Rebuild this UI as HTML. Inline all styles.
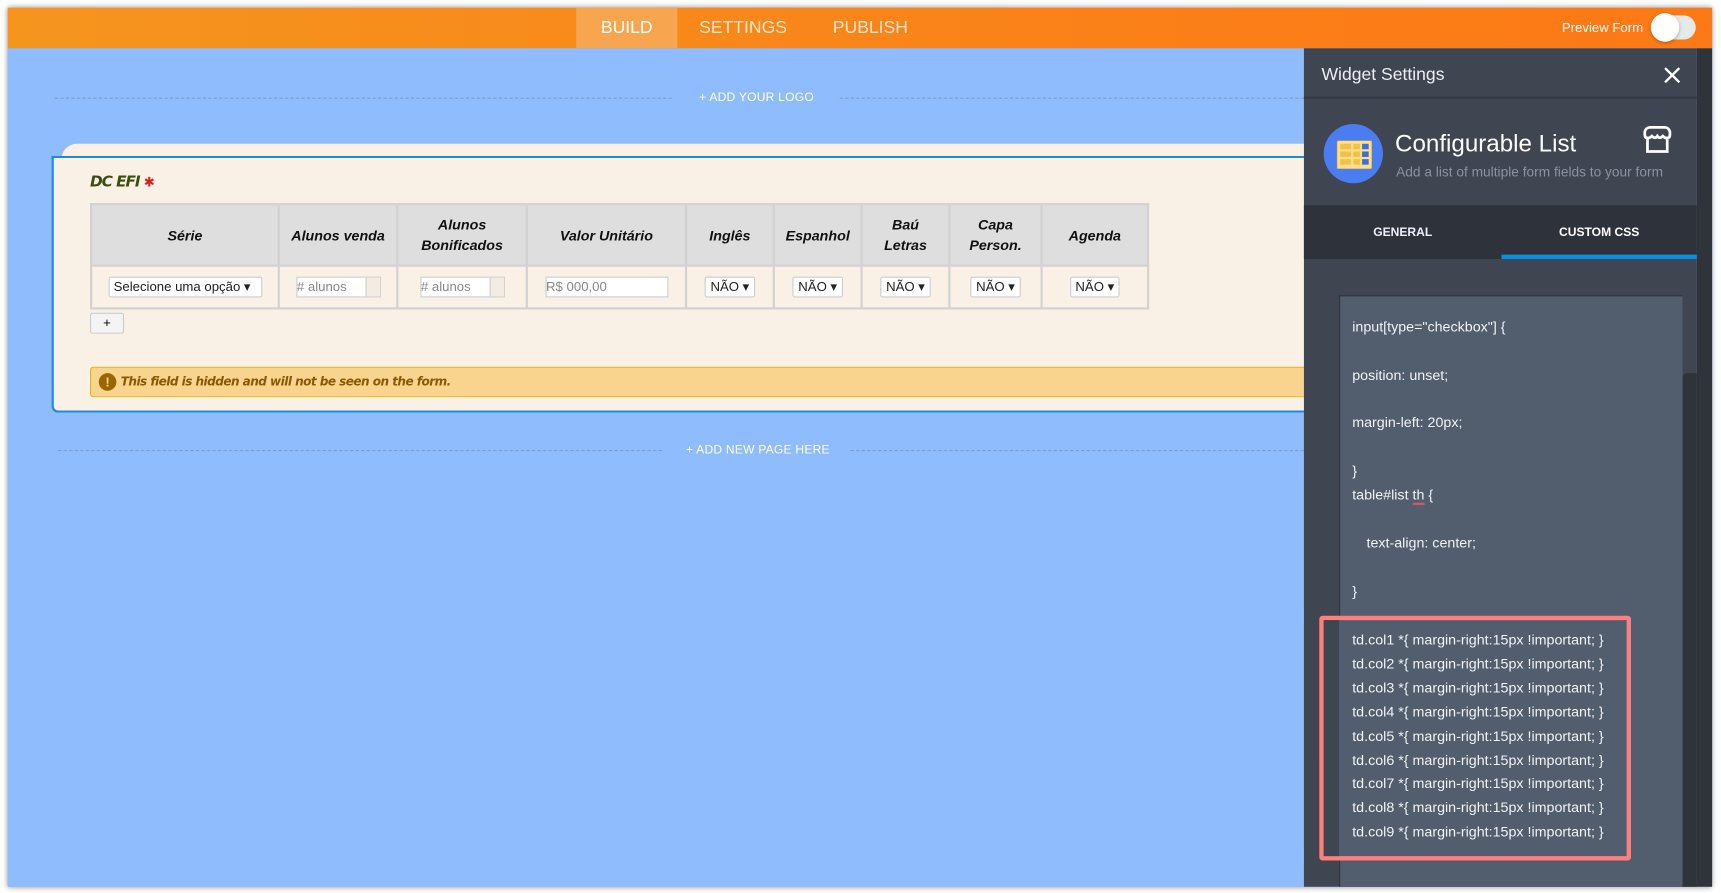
<!DOCTYPE html>
<html><head><meta charset="utf-8"><style>
html,body{margin:0;padding:0;width:1721px;height:893px;overflow:hidden;background:#fff}
#w{position:absolute;left:0;top:0;width:1568px;height:814px;transform:scale(1.09758);transform-origin:0 0;font-family:"Liberation Sans",sans-serif}
.a{position:absolute}
.frame{left:7px;top:7px;width:1553px;height:801px;background:#8fbcfd;box-shadow:0 0 5px rgba(0,0,0,.45);overflow:hidden}
.top{left:0;top:0;width:1553px;height:37px;background:linear-gradient(90deg,#f5951e,#fb7f18 70%,#fd7915)}
.tab{top:0;height:37px;line-height:37px;color:#ffe6cc;font-size:16px;text-align:center}
.dash{border-top:1px dashed #7f9dc8;height:0}
.lbl{color:#fff;font-size:11px;letter-spacing:.2px}
th,td{border:2px solid #d2d2d2;padding:0}
th{background:#dedede;font:bold italic 13px "Liberation Sans",sans-serif;color:#111;height:54px;line-height:19px}
td{height:37px;text-align:center}
.sel{display:inline-block;border:1px solid #ccc;background:#fff;border-radius:2px;font-size:12px;color:#222;height:17px;line-height:17px;padding:0 4px;text-align:left}
.inp{display:inline-block;border:1px solid #ccc;background:#fff;font-size:12px;color:#888;height:17px;line-height:17px;text-align:left;position:relative}
.css{color:#f1f3f6;font-size:13px;left:1232px}
</style></head><body><div id="w">
<div class="a frame">
 <div class="a top">
  <div class="a tab" style="left:518px;width:92px;background:#f8a550;color:#fff">BUILD</div>
  <div class="a tab" style="left:620px;width:100px">SETTINGS</div>
  <div class="a tab" style="left:740px;width:92px">PUBLISH</div>
  <div class="a" style="left:1416px;top:11px;color:#fff;font-size:12px">Preview Form</div>
  <div class="a" style="left:1499px;top:7px;width:39px;height:22px;border-radius:11px;background:#e4eaea"></div>
  <div class="a" style="left:1497px;top:5px;width:26px;height:26px;border-radius:13px;background:#fff;box-shadow:0 1px 3px rgba(0,0,0,.3)"></div>
 </div>
 <div class="a dash" style="left:43px;top:82px;width:562px"></div>
 <div class="a dash" style="left:758px;top:82px;width:423px"></div>
 <div class="a lbl" style="left:630px;top:76px">+ ADD YOUR LOGO</div>
 <div class="a dash" style="left:46px;top:403px;width:550px"></div>
 <div class="a dash" style="left:768px;top:403px;width:413px"></div>
 <div class="a lbl" style="left:618px;top:397px">+ ADD NEW PAGE HERE</div>
 <!-- card -->
 <div class="a" style="left:49px;top:124px;width:1140px;height:20px;background:#f9f1e6;border-radius:14px 0 0 0"></div>
 <div class="a" style="left:40px;top:135px;width:1141px;height:230px;background:#f9f1e6;border:2px solid #1a8de2;border-right:none;border-radius:0 0 0 6px"></div>
 <div class="a" style="left:75px;top:151px;font:bold italic 14px 'DejaVu Sans',sans-serif;color:#3b4d10;letter-spacing:-1px">DC EFI <span style="color:#e21b1b;font-size:12px">✱</span></div>
 <table class="a" style="left:75px;top:178px;border-collapse:collapse;width:965px">
  <tr><th style="width:169px">Série</th><th style="width:106px">Alunos venda</th><th style="width:116px">Alunos<br>Bonificados</th><th style="width:143px">Valor Unitário</th><th style="width:78px">Inglês</th><th style="width:78px">Espanhol</th><th style="width:78px">Baú<br>Letras</th><th style="width:82px">Capa<br>Person.</th><th>Agenda</th></tr>
  <tr><td><span class="sel" style="width:130px">Selecione uma opção ▾</span></td>
  <td><span class="inp" style="width:75px"># alunos<span class="a" style="right:0;top:0;width:12px;height:17px;border-left:1px solid #ccc;background:#f3ece2"></span></span></td>
  <td><span class="inp" style="width:75px"># alunos<span class="a" style="right:0;top:0;width:12px;height:17px;border-left:1px solid #ccc;background:#f3ece2"></span></span></td>
  <td><span class="inp" style="width:110px">R$ 000,00</span></td>
  <td><span class="sel">NÃO ▾</span></td><td><span class="sel">NÃO ▾</span></td><td><span class="sel">NÃO ▾</span></td><td><span class="sel">NÃO ▾</span></td><td><span class="sel">NÃO ▾</span></td></tr>
 </table>
 <div class="a" style="left:75px;top:278px;width:29px;height:17px;border:1px solid #ccc;border-radius:2px;background:#f4f4f4;text-align:center;font-size:12px;line-height:17px">+</div>
 <div class="a" style="left:75px;top:327px;width:1110px;height:26px;background:#f8d48e;border:1px solid #e2b616;border-right:none;border-radius:3px 0 0 3px"></div>
 <div class="a" style="left:83px;top:333px;width:16px;height:16px;border-radius:8px;background:#996600;color:#f8d48e;font:bold 12px/16px sans-serif;text-align:center">!</div>
 <div class="a" style="left:103px;top:334px;font:bold italic 11px 'DejaVu Sans',sans-serif;color:#8a5a00;letter-spacing:-.5px">This field is hidden and will not be seen on the form.</div>
 <!-- panel -->
 <div class="a" style="left:1181px;top:37px;width:358px;height:764px;background:#3f4551"></div>
 <div class="a" style="left:1539px;top:37px;width:14px;height:764px;background:#2f333a"></div>
 <div class="a" style="left:1181px;top:81px;width:358px;height:2px;background:#353a44"></div>
 <div class="a" style="left:1197px;top:53px;color:#eceef1;font-size:16px">Widget Settings</div>
 <svg class="a" style="left:1508px;top:53px" width="17" height="17"><path d="M2 2L15 15M15 2L2 15" stroke="#fff" stroke-width="2.2"/></svg>
 <div class="a" style="left:1199px;top:106px;width:54px;height:54px;border-radius:27px;background:#4a7ef0"></div>
 <svg class="a" style="left:1211px;top:121px" width="32" height="26"><rect x="0" y="0" width="32" height="26" rx="2" fill="#fde08a" stroke="#e0a040"/><g fill="#f5c04a"><rect x="3" y="3" width="10" height="5"/><rect x="3" y="10" width="10" height="5"/><rect x="3" y="17" width="10" height="5"/><rect x="15" y="3" width="6" height="5"/><rect x="15" y="10" width="6" height="5"/><rect x="15" y="17" width="6" height="5"/></g><g fill="#3a6fe0"><rect x="23" y="3" width="6" height="5"/><rect x="23" y="10" width="6" height="5"/><rect x="23" y="17" width="6" height="5"/></g></svg>
 <div class="a" style="left:1264px;top:111px;color:#fff;font-size:22px">Configurable List</div>
 <div class="a" style="left:1265px;top:143px;color:#8a93a1;font-size:12.5px">Add a list of multiple form fields to your form</div>
 <svg class="a" style="left:1488px;top:106px" width="30" height="28"><path d="M4 12 Q2 4 8 3 L22 3 Q28 4 26 12 Q23 14 20 11 Q17 14 15 11 Q13 14 10 11 Q7 14 4 12Z" fill="none" stroke="#fff" stroke-width="2.5"/><path d="M6 14 V25 H24 V14" fill="none" stroke="#fff" stroke-width="2.5"/></svg>
 <div class="a" style="left:1181px;top:180px;width:358px;height:49px;background:#2e333b"></div>
 <div class="a" style="left:1181px;top:199px;width:180px;text-align:center;color:#eef;font-weight:bold;font-size:11px">GENERAL</div>
 <div class="a" style="left:1361px;top:199px;width:178px;text-align:center;color:#fff;font-weight:bold;font-size:11px">CUSTOM CSS</div>
 <div class="a" style="left:1361px;top:225px;width:178px;height:4px;background:#0b8ee0"></div>
 <div class="a" style="left:1213px;top:262px;width:312px;height:539px;background:#525d6e;border-top:1px solid #2f343c;border-left:1px solid #2f343c"></div>
 <div class="a" style="left:1526px;top:333px;width:13px;height:468px;background:#2f333a;border-radius:4px 0 0 0"></div>
 <div class="a css" style="top:283px;left:1225px">input[type="checkbox"] {</div>
 <div class="a css" style="top:327px;left:1225px">position: unset;</div>
 <div class="a css" style="top:370px;left:1225px">margin-left: 20px;</div>
 <div class="a css" style="top:414px;left:1225px">}</div>
 <div class="a css" style="top:436px;left:1225px">table#list <span style="border-bottom:2px solid #d65a5a">th</span> {</div>
 <div class="a css" style="top:480px;left:1238px">text-align: center;</div>
 <div class="a css" style="top:524px;left:1225px">}</div>
 <div class="a" style="left:1195px;top:554px;width:276px;height:215px;border:4px solid #fd8080;border-radius:3px;background:#525d6e"></div>
 <div class="a" style="left:1199px;top:558px;width:14px;height:215px;background:#3f4551"></div>
 <div class="a css" style="top:565px;left:1225px;line-height:21.9px">td.col1 *{ margin-right:15px !important; }<br>td.col2 *{ margin-right:15px !important; }<br>td.col3 *{ margin-right:15px !important; }<br>td.col4 *{ margin-right:15px !important; }<br>td.col5 *{ margin-right:15px !important; }<br>td.col6 *{ margin-right:15px !important; }<br>td.col7 *{ margin-right:15px !important; }<br>td.col8 *{ margin-right:15px !important; }<br>td.col9 *{ margin-right:15px !important; }</div>
</div>
</div></body></html>
